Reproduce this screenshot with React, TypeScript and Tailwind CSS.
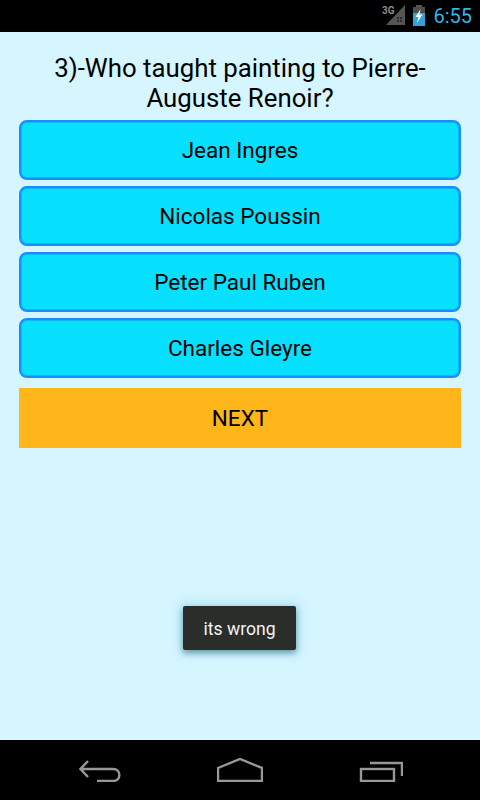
import React from 'react';

const answers = ['Jean Ingres', 'Nicolas Poussin', 'Peter Paul Ruben', 'Charles Gleyre'];

const StatusBar = () => (
  <div className="h-8 shrink-0 bg-black flex items-center justify-end relative">
    <svg className="absolute left-[386px] top-[5px]" width="20" height="20" viewBox="0 0 20 20">
      <path d="M19 0V20H0Z" fill="#555" />
      <path d="M11 12h2v2h-2zM14 12h2v2h-2zM11 15h2v2h-2zM14 15h2v2h-2z" fill="#2b2b2b" />
    </svg>
    <span className="absolute left-[382px] top-[6px] text-[10px] leading-[10px] font-bold text-[#8a8a8a]">3G</span>
    <svg className="absolute left-[412px] top-[5px]" width="14" height="21" viewBox="0 0 14 21">
      <rect x="4" y="0" width="6" height="2" fill="#555" />
      <rect x="1" y="2" width="12" height="19" fill="#4d4d4d" />
      <rect x="1" y="8" width="12" height="13" fill="#33a5d5" />
      <path d="M8.5 4 3.5 12H6.5L5 18 10.5 9.5H7.5Z" fill="#fff" />
    </svg>
    <span className="mr-2 text-[20px] leading-8 text-[#33b5e5]">6:55</span>
  </div>
);

const NavBar = () => (
  <div className="h-[60px] shrink-0 bg-black flex items-center justify-between pl-[79px] pr-[77px]">
    <svg width="42" height="24" viewBox="0 0 42 24" fill="none" stroke="#989898" strokeWidth="2.4">
      <path d="M9 3 1.5 11 9 19M2 11H34C42.5 11 42.5 23 34 23H18" />
    </svg>
    <svg width="46" height="24" viewBox="0 0 46 24" fill="none" stroke="#989898" strokeWidth="2.4">
      <path d="M1 10 23 1 45 10V23H1Z" />
    </svg>
    <svg width="44" height="24" viewBox="0 0 44 24" fill="none" stroke="#989898" strokeWidth="2.4">
      <rect x="2" y="11" width="33" height="12" />
      <path d="M11 5H43V18" />
    </svg>
  </div>
);

export default function App() {
  return (
    <div className="relative w-[480px] h-[800px] flex flex-col overflow-hidden font-['Roboto',sans-serif]">
      <StatusBar />
      <main className="flex-1 bg-[#d5f5ff] px-[19px] pt-[21px]">
        <h1 className="text-[25.8px] leading-[30px] text-center text-black font-normal">
          3)-Who taught painting to Pierre-<br />Auguste Renoir?
        </h1>
        <div className="mt-[7px] flex flex-col gap-[6px]">
          {answers.map((a) => (
            <button
              key={a}
              className="h-[60px] pt-[2px] rounded-lg border-2 border-[#1a8cff] shadow-[inset_0_0_0_1px_rgba(26,140,255,0.5)] bg-[#08e0ff] text-[22.5px] text-black"
            >
              {a}
            </button>
          ))}
        </div>
        <button className="mt-[10px] w-full h-[60px] pt-[2px] bg-[#ffb61a] text-[22.5px] text-black">NEXT</button>
      </main>
      <NavBar />
      <div className="absolute left-[183px] top-[606px] w-[113px] h-[44px] pt-[2px] rounded-[2px] bg-[#2b2d2b] text-[#f2f2f2] text-[17.6px] flex items-center justify-center shadow-[0_3px_6px_rgba(0,50,70,0.45),0_0_10px_4px_rgba(140,220,235,0.45)]">
        its wrong
      </div>
    </div>
  );
}
